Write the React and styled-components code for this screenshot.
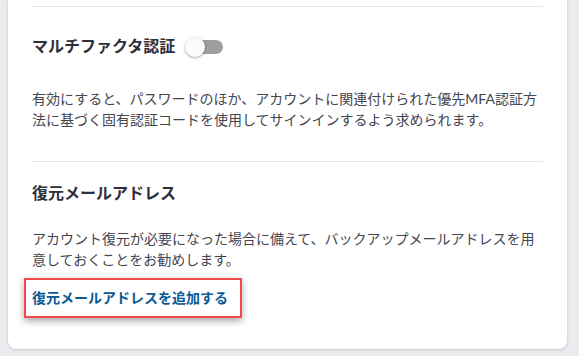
import React from 'react';
import styled, { createGlobalStyle } from 'styled-components';

const GlobalStyle = createGlobalStyle`
  html, body {
    margin: 0;
    background: #ebebf0;
  }
  body {
    font-family: Lato, "Noto Sans CJK JP", sans-serif;
  }
`;

const Page = styled.div`
  padding: 0 12px 0 8px;
  height: 356px;
  box-sizing: border-box;
`;

const Card = styled.div`
  background: #fff;
  border-radius: 0 0 8px 8px;
  box-shadow: 0 1px 3px rgba(0, 0, 0, 0.18);
  padding: 6px 24px 31px 24px;
`;

const Section = styled.section`
  border-top: 1px solid #e4e4e9;
  padding: ${p => p.$top}px 0 ${p => p.$bottom}px;
`;

const Header = styled.div`
  display: flex;
  align-items: center;
  gap: 10px;
  height: ${p => p.$height}px;
`;

const Title = styled.h3`
  margin: 0;
  font-size: 16px;
  line-height: 24px;
  font-weight: 700;
  color: #2f2f3b;
`;

const Toggle = styled.span`
  position: relative;
  display: inline-block;
  width: 38px;
  height: 20px;
  &::before {
    content: '';
    position: absolute;
    left: 10px;
    top: 4px;
    width: 28px;
    height: 14px;
    border-radius: 7px;
    background: #9e9e9e;
  }
  &::after {
    content: '';
    position: absolute;
    left: 0;
    top: 1px;
    width: 20px;
    height: 20px;
    border-radius: 50%;
    background: #fafafa;
    box-shadow: 0 1px 3px rgba(0, 0, 0, 0.35);
  }
`;

const Text = styled.p`
  margin: 23px 0 0;
  font-size: 14px;
  line-height: 21px;
  color: #454550;
`;

const Highlight = styled.div`
  display: inline-block;
  margin: 8px 0 0 -8px;
  padding: 7px 12px 8px 6px;
  border: 2px solid #f24a4a;
  box-shadow: 0 3px 7px rgba(0, 0, 0, 0.35);
`;

const Link = styled.a`
  font-size: 14px;
  line-height: 20px;
  font-weight: 700;
  color: #0b5a92;
  text-decoration: none;
  cursor: pointer;
`;

const App = () => (
  <Page>
    <GlobalStyle />
    <Card>
      <Section $top={19} $bottom={31}>
        <Header $height={39}>
          <Title>マルチファクタ認証</Title>
          <Toggle />
        </Header>
        <Text>
          有効にすると、パスワードのほか、アカウントに関連付けられた優先MFA認証方法に基づく固有認証コードを使用してサインインするよう求められます。
        </Text>
      </Section>
      <Section $top={19} $bottom={0}>
        <Header $height={24}>
          <Title>復元メールアドレス</Title>
        </Header>
        <Text>
          アカウント復元が必要になった場合に備えて、バックアップメールアドレスを用意しておくことをお勧めします。
        </Text>
        <Highlight>
          <Link>復元メールアドレスを追加する</Link>
        </Highlight>
      </Section>
    </Card>
  </Page>
);

export default App;
